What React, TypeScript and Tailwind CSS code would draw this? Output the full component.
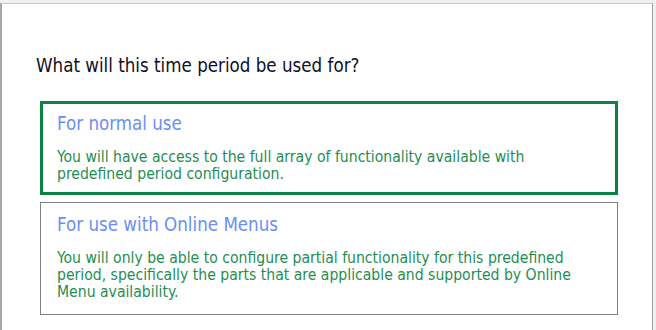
const OPTIONS = [
  {
    id: "normal",
    title: "For normal use",
    body: "You will have access to the full array of functionality available with predefined period configuration.",
    selected: true,
  },
  {
    id: "online",
    title: "For use with Online Menus",
    body: "You will only be able to configure partial functionality for this predefined period, specifically the parts that are applicable and supported by Online Menu availability.",
    selected: false,
  },
];

export default function App() {
  return (
    <div
      className="w-[656px] h-[330px] overflow-hidden bg-[#f0f0f0] pt-[3px]"
      style={{ fontFamily: '"DejaVu Sans Condensed", "DejaVu Sans", sans-serif' }}
    >
      <div className="w-[653px] h-[327px] bg-white border-t border-t-[#c8c8c8] border-l-2 border-l-[#a8a8a8] border-r border-r-[#a0a0a0]">
        <h1 className="ml-[34px] mt-[50px] text-[18.6px] leading-[24px] text-[#101028]">
          What will this time period be used for?
        </h1>
        <div className="mt-[23px] ml-[38px] w-[578px] flex flex-col gap-[7px]">
          {OPTIONS.map((o) => (
            <div
              key={o.id}
              className={
                o.selected
                  ? "border-[3px] border-[#0b8443] pl-[14px] pr-4 pt-[9px] pb-[9px]"
                  : "border border-[#808080] pl-[16px] pr-4 pt-[11px] pb-[13px]"
              }
            >
              <h2 className="text-[18.6px] leading-[22px] text-[#6a8ef7]">{o.title}</h2>
              <p className="mt-[14px] text-[15.6px] leading-[17px] text-[#1f8d53]">{o.body}</p>
            </div>
          ))}
        </div>
      </div>
    </div>
  );
}
